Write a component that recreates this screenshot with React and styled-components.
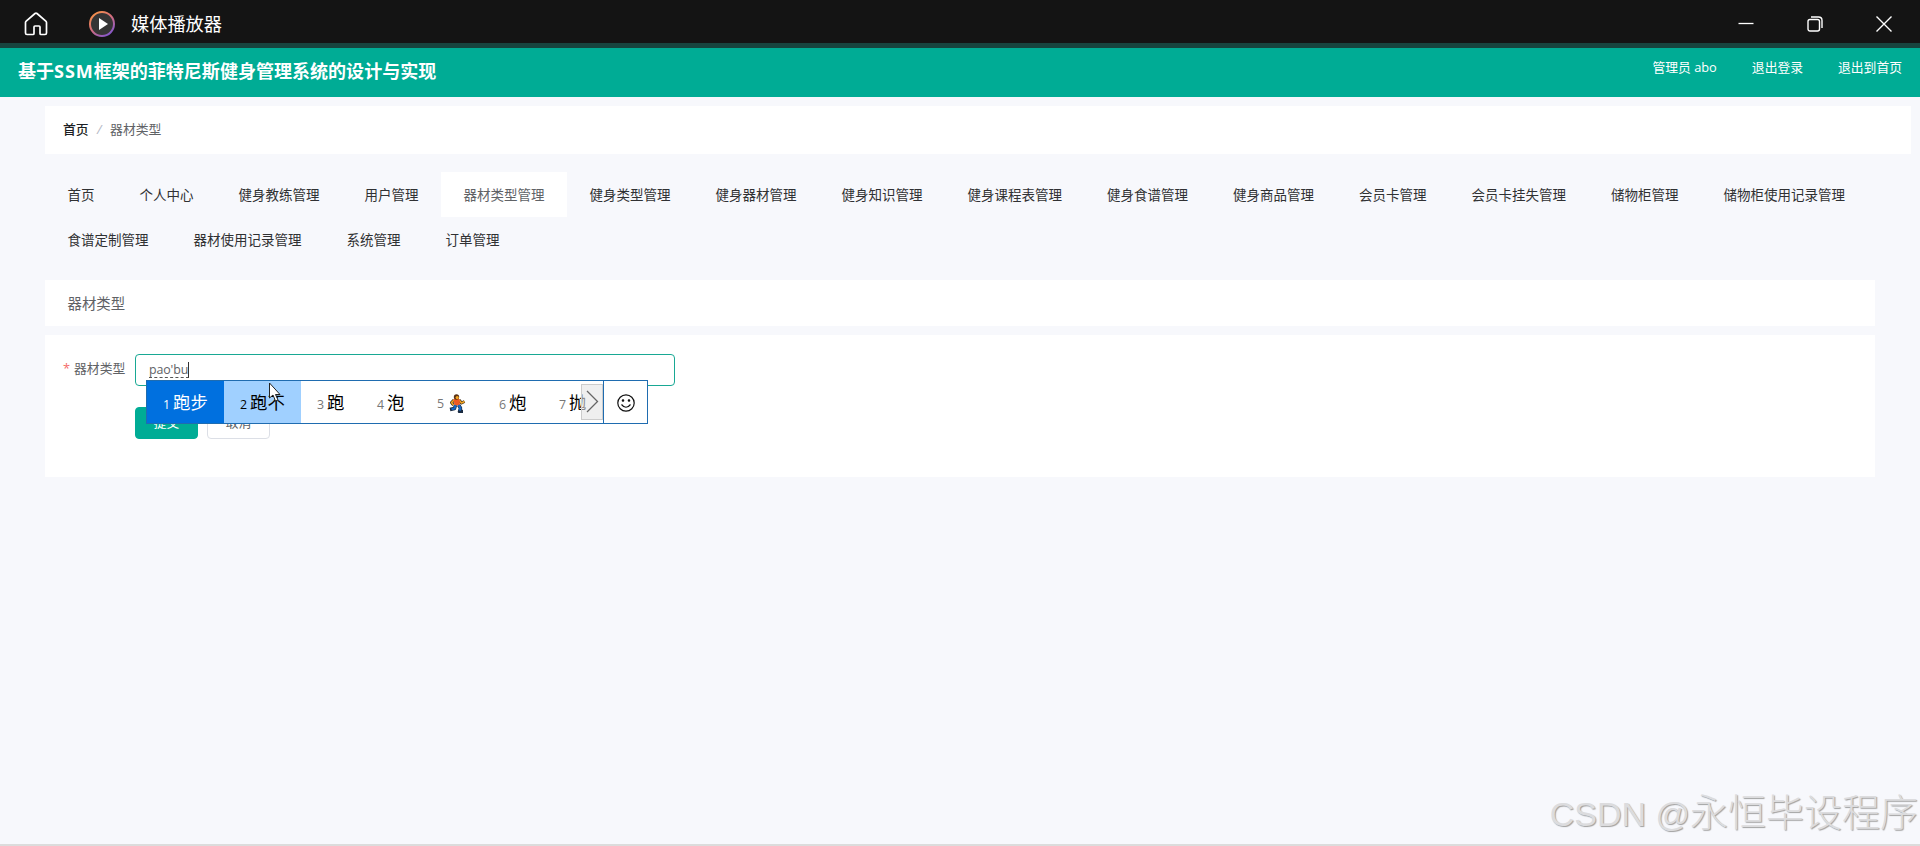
import React from "react";
import styled, { createGlobalStyle } from "styled-components";

const GlobalStyle = createGlobalStyle`
  * {
    box-sizing: border-box;
  }
  body {
    margin: 0;
    overflow: hidden;
    background: #f7f8fc;
    font-family: "Open Sans", "Noto Sans CJK SC", sans-serif;
    font-size: 12.8px;
    color: #333333;
  }
`;

export const Page = styled.div`
  position: relative;
  height: 846px;
  overflow: hidden;
  border-bottom: 2px solid #dcdcdc;
`;

export const TitleBar = styled.div`
  display: flex;
  align-items: center;
  height: 48px;
  padding: 0 10px 0 24px;
  background: #141414;
  border-bottom: 5px solid #17453f;
  color: #ffffff;
  svg {
    display: block;
  }
`;

export const HomeIcon = styled.svg`
  margin-top: 4px;
`;

export const PlayerIcon = styled.div`
  margin: 5px 0 0 41px;
`;

export const PlayerName = styled.div`
  margin: 5px 0 0 16px;
  font-size: 18.2px;
  line-height: 24px;
`;

export const WindowButtons = styled.div`
  display: flex;
  gap: 53px;
  margin: 4px 18px 0 auto;
`;

export const Header = styled.div`
  display: flex;
  justify-content: space-between;
  height: 49px;
  padding: 0 18px;
  background: #00ac95;
  color: #ffffff;
`;

export const SystemName = styled.div`
  padding-top: 10px;
  font-size: 18.05px;
  font-weight: bold;
  line-height: 26px;
  span {
    letter-spacing: 0.9px;
  }
`;

export const UserLinks = styled.div`
  display: flex;
  gap: 35px;
  padding-top: 9px;
  line-height: 20px;
`;

export const Breadcrumb = styled.div`
  display: flex;
  align-items: center;
  height: 48px;
  margin: 9px 9px 0 45px;
  padding: 0 18px 3px;
  background: #ffffff;
  color: #606266;
  b {
    font-weight: 500;
    color: #1d1f24;
  }
  i {
    margin: 0 8.5px;
    color: #b4b8c4;
  }
`;

export const Menu = styled.div`
  display: flex;
  flex-wrap: wrap;
  margin: 18px 45px;
`;

export const MenuItem = styled.div`
  height: 45px;
  padding: 1px 22.5px 0;
  font-size: 13.5px;
  line-height: 45px;
  color: ${(props) => (props.$active ? "#606266" : "#303133")};
  background: ${(props) => (props.$active ? "#ffffff" : "transparent")};
`;

export const PanelTitle = styled.div`
  height: 46px;
  margin: 0 45px 9px;
  padding: 1px 22.5px 0;
  background: #ffffff;
  font-size: 14.4px;
  line-height: 46px;
  color: #606266;
`;

export const FormPanel = styled.div`
  height: 142px;
  margin: 0 45px;
  padding: 19px 18px;
  background: #ffffff;
`;

export const FormRow = styled.div`
  display: flex;
`;

export const Label = styled.div`
  width: 72px;
  padding-right: 10px;
  text-align: right;
  line-height: 28px;
  white-space: nowrap;
  color: #606266;
  &:before {
    content: "*";
    margin-right: 4px;
    color: #f56c6c;
  }
`;

export const InputBox = styled.div`
  position: relative;
  display: flex;
  align-items: flex-start;
  width: 540px;
  height: 32px;
  padding: 6px 13px;
  border: 1px solid #18a894;
  border-radius: 4px;
  color: #606266;
`;

export const Composing = styled.span`
  height: 16px;
  margin-top: 1px;
  font-size: 12.4px;
  letter-spacing: -0.1px;
  line-height: 15px;
  border-right: 1px solid #333333;
  border-bottom: 1px dashed #555555;
`;

export const Buttons = styled.div`
  display: flex;
  gap: 9px;
  margin: 21px 0 0 72px;
`;

export const Button = styled.div`
  width: 63px;
  height: 32px;
  border: 1px solid ${(props) => (props.$primary ? "#00ac95" : "#dcdfe6")};
  border-radius: 4px;
  background: ${(props) => (props.$primary ? "#00ac95" : "#ffffff")};
  color: ${(props) => (props.$primary ? "#ffffff" : "#606266")};
  line-height: 28px;
  text-align: center;
`;

export const ImePopup = styled.div`
  position: absolute;
  z-index: 2;
  top: 25px;
  left: 10px;
  display: flex;
  width: 502px;
  height: 44px;
  border: 1px solid #1f6cb0;
  background: #ffffff;
  color: #000000;
`;

const candidateColors = {
  selected: "background: #0070df; color: #ffffff;",
  hovered: "background: #a0d0ff; color: #000000;",
  normal: "background: #ffffff; color: #777777;",
};

export const Candidate = styled.div`
  display: flex;
  align-items: baseline;
  flex: none;
  gap: 3px;
  width: ${(props) => props.$width}px;
  padding-left: 16px;
  font-size: 12.4px;
  line-height: 42px;
  white-space: nowrap;
  ${(props) => candidateColors[props.$state]}
  b {
    font-weight: normal;
    font-size: 17.4px;
    color: ${(props) => (props.$state === "selected" ? "#ffffff" : "#000000")};
  }
`;

export const EmojiCandidate = styled(Candidate)`
  align-items: center;
  gap: 5px;
  padding-top: 3px;
`;

export const NextPage = styled.div`
  position: absolute;
  top: 3px;
  left: 434px;
  width: 22px;
  height: 36px;
  border: 1px solid #cccccc;
  background: rgba(228, 228, 228, 0.6);
`;

export const EmojiCell = styled.div`
  position: absolute;
  top: 0;
  right: 0;
  display: flex;
  align-items: center;
  justify-content: center;
  width: 44px;
  height: 42px;
  padding-top: 1px;
  border-left: 1px solid #1f6cb0;
  background: #ffffff;
`;

export const Pointer = styled.svg`
  position: absolute;
  z-index: 3;
  top: 27px;
  left: 132px;
`;

export const Watermark = styled.div`
  position: absolute;
  right: 2px;
  bottom: 6px;
  font-family: "Liberation Sans", "Noto Sans CJK SC", sans-serif;
  font-size: 38px;
  font-weight: 300;
  line-height: 48px;
  color: #dcdcde;
  text-shadow: 1px 1px 1px #a0a0a0;
  white-space: nowrap;
  span {
    font-size: 34px;
  }
`;

const menus = [
  "首页",
  "个人中心",
  "健身教练管理",
  "用户管理",
  "器材类型管理",
  "健身类型管理",
  "健身器材管理",
  "健身知识管理",
  "健身课程表管理",
  "健身食谱管理",
  "健身商品管理",
  "会员卡管理",
  "会员卡挂失管理",
  "储物柜管理",
  "储物柜使用记录管理",
  "食谱定制管理",
  "器材使用记录管理",
  "系统管理",
  "订单管理",
];

const Runner = () => (
  <svg width="17" height="19" viewBox="0 0 17 19" strokeLinejoin="round">
    <path d="M5 6L2.500 8.500 4.500 11M10 6l2.500 3 3-1.500" fill="none" stroke="#3a2a18" strokeWidth="3" />
    <path d="M6.500 11l-1 3.500-4.500 1M9.500 11l2 3-1 3.500 3.500 0" fill="none" stroke="#1a2a40" strokeWidth="3.400" />
    <path d="M5 6L2.500 8.500 4.500 11M10 6l2.500 3 3-1.500" fill="none" stroke="#f5a623" strokeWidth="1.600" />
    <path d="M4.500 5h6l.5 6.500H5.500z" fill="#ef5a24" />
    <path d="M6.500 11l-1 3.500-3 .7M9.500 11l2 3-1 2.500" fill="none" stroke="#1668c8" strokeWidth="2.200" />
    <circle cx="7.500" cy="3" r="2.700" fill="#5a3214" />
    <circle cx="8.200" cy="3.600" r="1.600" fill="#f5a623" />
  </svg>
);

const candidates = [
  { text: "跑步", width: 77, state: "selected" },
  { text: "跑不", width: 77, state: "hovered" },
  { text: "跑", width: 60 },
  { text: "泡", width: 60 },
  { icon: <Runner />, width: 62 },
  { text: "炮", width: 60 },
  { text: "抛", width: 55 },
];

const App = () => {
  return (
    <Page>
      <GlobalStyle />
      <TitleBar>
        <HomeIcon width="24" height="24" viewBox="0 0 24 24" fill="none" stroke="#ffffff" strokeWidth="1.7" strokeLinejoin="round">
          <path d="M1.500 10.500q0-.8.700-1.400L11 1.500q1-.8 2 0l8.800 7.600q.7.600.7 1.400V21q0 1.500-1.500 1.500h-4q-1 0-1-1V15q0-1-1-1h-4q-1 0-1 1v6.500q0 1-1 1H3q-1.500 0-1.500-1.500z" />
        </HomeIcon>
        <PlayerIcon>
          <svg width="26" height="26" viewBox="0 0 26 26">
            <defs>
              <linearGradient id="ring" x1="0" y1="0" x2="0.7" y2="1">
                <stop offset="0" stopColor="#ff9a3c" />
                <stop offset="0.5" stopColor="#d87078" />
                <stop offset="1" stopColor="#8858c8" />
              </linearGradient>
            </defs>
            <circle cx="13" cy="13" r="12" fill="#353535" stroke="url(#ring)" strokeWidth="2" />
            <path d="M10 7l9 6-9 6z" fill="#ffffff" />
          </svg>
        </PlayerIcon>
        <PlayerName>媒体播放器</PlayerName>
        <WindowButtons>
          <svg width="16" height="16" viewBox="0 0 16 16">
            <path d="M0.500 7.500h15" stroke="#ffffff" strokeWidth="1.300" />
          </svg>
          <svg width="16" height="16" viewBox="0 0 16 16" fill="none" stroke="#ffffff" strokeWidth="1.400">
            <rect x="1" y="3.500" width="11.500" height="11.500" rx="2" />
            <path d="M4 1h7.500q3.500 0 3.500 3.500V12" />
          </svg>
          <svg width="16" height="16" viewBox="0 0 16 16">
            <path d="M0.500 0.500l15 15M15.500 0.500l-15 15" stroke="#ffffff" strokeWidth="1.400" />
          </svg>
        </WindowButtons>
      </TitleBar>
      <Header>
        <SystemName>
          基于<span>SSM</span>框架的菲特尼斯健身管理系统的设计与实现
        </SystemName>
        <UserLinks>
          <div>管理员 abo</div>
          <div>退出登录</div>
          <div>退出到首页</div>
        </UserLinks>
      </Header>
      <Breadcrumb>
        <b>首页</b>
        <i>/</i>
        器材类型
      </Breadcrumb>
      <Menu>
        {menus.map((name) => (
          <MenuItem key={name} $active={name === "器材类型管理"}>
            {name}
          </MenuItem>
        ))}
      </Menu>
      <PanelTitle>器材类型</PanelTitle>
      <FormPanel>
        <FormRow>
          <Label>器材类型</Label>
          <InputBox>
            <Composing>pao'bu</Composing>
            <ImePopup>
              {candidates.map((item, index) => {
                const Cell = item.icon ? EmojiCandidate : Candidate;
                return (
                  <Cell key={index} $width={item.width} $state={item.state || "normal"}>
                    {index + 1}
                    {item.icon || <b>{item.text}</b>}
                  </Cell>
                );
              })}
              <NextPage>
                <svg width="20" height="34" viewBox="0 0 20 34">
                  <path d="M5 6l10.500 10.500L5 27" fill="none" stroke="#666666" strokeWidth="1.300" />
                </svg>
              </NextPage>
              <EmojiCell>
                <svg width="18" height="18" viewBox="0 0 18 18" fill="none" stroke="#111111" strokeWidth="1.200">
                  <circle cx="9" cy="9" r="8.200" />
                  <path d="M4.500 10.500q4.500 5.500 9 0" />
                  <circle cx="6" cy="6.500" r="0.700" fill="#111111" />
                  <circle cx="12" cy="6.500" r="0.700" fill="#111111" />
                </svg>
              </EmojiCell>
            </ImePopup>
            <Pointer width="13" height="20" viewBox="0 0 13 20">
              <path d="M1.500 1v15l3.500-3 2.500 6 2.500-1-2.500-5.500h4.500z" fill="#ffffff" stroke="#222222" />
            </Pointer>
          </InputBox>
        </FormRow>
        <Buttons>
          <Button $primary>提交</Button>
          <Button>取消</Button>
        </Buttons>
      </FormPanel>
      <Watermark>
        <span>CSDN @</span>永恒毕设程序
      </Watermark>
    </Page>
  );
};

export default App;
